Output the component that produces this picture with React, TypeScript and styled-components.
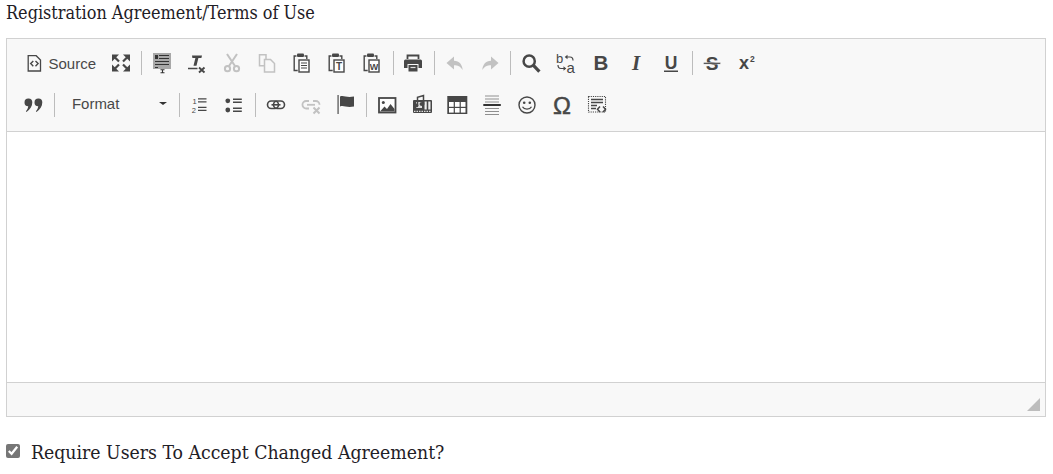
import React from "react";
import styled, { createGlobalStyle } from "styled-components";

const GlobalStyle = createGlobalStyle`
  html, body {
    margin: 0;
    padding: 0;
    background: #fff;
  }
`;

const Page = styled.div`
  padding: 0 7px 0 6px;
  font-family: "DejaVu Serif Condensed", "DejaVu Serif", "Liberation Serif", serif;
  color: #1f2026;
`;

const FieldLabel = styled.div`
  height: 38px;
  line-height: 26px;
  font-size: 17.9px;
`;

const Editor = styled.div`
  border: 1px solid #d1d1d1;
  display: flex;
  flex-direction: column;
`;

const Toolbar = styled.div`
  background: #f8f8f8;
  border-bottom: 1px solid #d1d1d1;
  padding: 3px 0 5px 9.5px;
  height: 84px;
`;

const ToolbarRow = styled.div`
  display: flex;
  align-items: center;
  height: 42px;
`;

const Button = styled.div<{ $off?: boolean; $wide?: boolean }>`
  width: ${(p) => (p.$wide ? "87px" : "35px")};
  height: 42px;
  display: flex;
  align-items: center;
  padding-left: 7px;
  box-sizing: border-box;
  gap: 5px;
  flex: none;
  opacity: ${(p) => (p.$off ? 0.3 : 1)};

  svg {
    flex: none;
    display: block;
    overflow: visible;
  }
`;

const ButtonText = styled.span`
  font: 15px "Liberation Sans", Arial, sans-serif;
  color: #484848;
`;

const Separator = styled.div`
  width: 1px;
  height: 24px;
  background: #bcbcbc;
  margin: 0 2.7px;
  flex: none;
`;

const Combo = styled.div`
  width: 118px;
  flex: none;
  display: flex;
  align-items: center;
  justify-content: space-between;
  box-sizing: border-box;
  padding: 0 9px 0 14px;
  margin-bottom: 3px;
  font: 15px "Liberation Sans", Arial, sans-serif;
  color: #484848;
`;

const ComboArrow = styled.span`
  width: 0;
  height: 0;
  border-left: 4px solid transparent;
  border-right: 4px solid transparent;
  border-top: 3.5px solid #333;
`;

const Content = styled.div`
  height: 250px;
  background: #fff;
`;

const BottomBar = styled.div`
  height: 34px;
  box-sizing: border-box;
  background: #f8f8f8;
  border-top: 1px solid #d1d1d1;
  display: flex;
  justify-content: flex-end;
  align-items: flex-end;
  padding: 0 5px 5px 0;
`;

const Resizer = styled.div`
  width: 13px;
  height: 13px;
  background: #bdbdbd;
  clip-path: polygon(100% 0, 100% 100%, 0 100%);
`;

const CheckRow = styled.label`
  display: flex;
  align-items: center;
  margin-top: 23px;
  font-size: 19.25px;
  line-height: 26px;
`;

const CheckBox = styled.input`
  width: 14px;
  height: 14px;
  margin: 0 11px 4px 0;
  accent-color: #767676;
`;

const INK = "#474747";

const Svg = ({ children }: { children: React.ReactNode }) => (
  <svg width="20" height="20" viewBox="0 0 20 20" fill="none">
    {children}
  </svg>
);

const letter = { fontFamily: "Liberation Sans", fill: INK, fontWeight: 700 } as const;

const clipboard = (
  <>
    <path d="M4.5 3H2.2v14.5h3.5M12.5 3h2.3v3" stroke={INK} strokeWidth="1.4" />
    <rect x="5" y="0.5" width="7" height="3.5" rx="1" fill={INK} />
    <rect x="7" y="7" width="10" height="12" fill="#fff" stroke={INK} strokeWidth="1.4" />
  </>
);

const icons: Record<string, React.ReactNode> = {
  source: (
    <>
      <path d="M4.200 2.700h8l4.300 4.300v11H4.200z" stroke={INK} strokeWidth="1.300" />
      <path d="M9.300 8l-2.600 2.600 2.600 2.600M11.500 8l2.600 2.600-2.600 2.600" stroke={INK} strokeWidth="1.400" />
    </>
  ),
  maximize: (
    <g>
      <g fill={INK}>
        <path d="M1 1.500h7L1 8.500z" />
        <path d="M19 1.500h-7l7 7z" />
        <path d="M1 18.500h7l-7-7z" />
        <path d="M19 18.500h-7l7-7z" />
      </g>
      <path d="M3 3.500l5 5M17 3.500l-5 5M3 16.500l5-5M17 16.500l-5-5" stroke={INK} strokeWidth="2.200" />
    </g>
  ),
  templates: (
    <>
      <rect x="1" y="0" width="18" height="16" fill="#a8a8a8" />
      <path d="M7 2.500h10M7 5.500h10M3 8.500h14M3 11.500h14M3 14.500h3" stroke="#333" strokeWidth="1.200" />
      <rect x="3" y="2" width="3" height="4" fill="#333" />
      <path d="M8.500 16.700h4M10.500 16.700v3M8.500 19.700h4" stroke="#333" strokeWidth="1.100" />
    </>
  ),
  removeFormat: (
    <>
      <path d="M5 2.500h10l-.6 2.400h-3l-1.900 7.800h-3l1.900-7.800h-3z" fill={INK} />
      <path d="M1 15.500h9.500" stroke={INK} strokeWidth="1.500" />
      <path d="M12 14.500l5.500 5M17.500 14.500l-5.500 5" stroke={INK} strokeWidth="1.900" />
    </>
  ),
  cut: (
    <g stroke={INK} strokeWidth="2">
      <path d="M5 1l8 12M15 1L7 13" />
      <circle cx="5.500" cy="15.700" r="2.600" />
      <circle cx="14.500" cy="15.700" r="2.600" />
    </g>
  ),
  copy: (
    <g stroke={INK} strokeWidth="1.500">
      <path d="M9 6V1.800H2.500v11H7" />
      <path d="M7.500 6.500h6l4 4v8.500h-10z" />
    </g>
  ),
  paste: (
    <>
      {clipboard}
      <path d="M9 10h6M9 12.500h6M9 15h6" stroke={INK} strokeWidth="1.100" />
    </>
  ),
  pasteText: (
    <>
      {clipboard}
      <text x="12" y="16.500" fontSize="10" textAnchor="middle" {...letter}>T</text>
    </>
  ),
  pasteWord: (
    <>
      {clipboard}
      <text x="12" y="16.500" fontSize="9" textAnchor="middle" {...letter}>W</text>
    </>
  ),
  print: (
    <>
      <path d="M4.500 6V2.500h11V6" stroke={INK} strokeWidth="1.800" />
      <path d="M2.500 6.500h15a1.500 1.500 0 0 1 1.500 1.500v7h-3.500v-4h-11v4H1V8a1.500 1.500 0 0 1 1.500-1.500z" fill={INK} />
      <rect x="5.500" y="12" width="9" height="6.500" fill={INK} />
      <path d="M7.500 14.500h5" stroke="#ddd" strokeWidth="1.200" />
    </>
  ),
  undo: <path d="M9 3.500L1.500 10 9 16.500v-4.200c4 0 6.200 1 8.700 4.700-.5-5.700-3.400-9-8.700-9.300z" fill={INK} />,
  redo: <path d="M11 3.500l7.500 6.500-7.500 6.500v-4.200c-4 0-6.200 1-8.700 4.700.5-5.700 3.400-9 8.700-9.300z" fill={INK} />,
  find: (
    <g stroke={INK}>
      <circle cx="8.200" cy="8.200" r="5.600" strokeWidth="2.500" />
      <path d="M12.200 12.200l6.200 6.400" strokeWidth="3.200" />
    </g>
  ),
  replace: (
    <>
      <text x="0" y="10" fontSize="13" fontFamily="Liberation Sans" fill={INK}>b</text>
      <text x="10.500" y="20" fontSize="15" fontFamily="Liberation Sans" fill={INK}>a</text>
      <path d="M17 7.500c0-2-1-3.500-3-3.500h-3M2 12c0 2 1 3.500 3 3.500h3" stroke={INK} strokeWidth="1.200" />
      <path d="M11.500 1.800v4.400L8.700 4zM7.500 13.300v4.400l2.800-2.200z" fill={INK} />
    </>
  ),
  bold: <text x="10" y="17" fontSize="20.500" textAnchor="middle" {...letter}>B</text>,
  italic: (
    <text x="10" y="17" fontSize="21" textAnchor="middle" fontFamily="Liberation Serif" fontStyle="italic" fontWeight="700" fill={INK}>I</text>
  ),
  underline: (
    <>
      <text x="10" y="15.500" fontSize="17.500" textAnchor="middle" {...letter}>U</text>
      <rect x="3" y="17.500" width="14" height="1.500" fill={INK} />
    </>
  ),
  strike: (
    <>
      <text x="10" y="17" fontSize="19" textAnchor="middle" {...letter}>S</text>
      <rect x="1.500" y="9.500" width="17" height="1.600" fill={INK} stroke="#f8f8f8" strokeWidth="0.400" />
    </>
  ),
  superscript: (
    <>
      <text x="2" y="16" fontSize="18" {...letter}>x</text>
      <text x="13" y="8.500" fontSize="8.500" {...letter}>2</text>
    </>
  ),
  quote: (
    <g fill={INK}>
      <path d="M4.500 3.500a3.800 3.800 0 0 1 3.800 3.800c0 4-2.300 7.500-5.800 9.700l-.6-.8c1.500-1.700 2.200-3.200 2.300-5a3.850 3.850 0 0 1 .3-7.700z" />
      <path d="M14.500 3.500a3.800 3.800 0 0 1 3.800 3.800c0 4-2.300 7.500-5.800 9.700l-.6-.8c1.500-1.700 2.200-3.200 2.300-5a3.850 3.850 0 0 1 .3-7.700z" />
    </g>
  ),
  numbered: (
    <>
      <text x="3.500" y="8.500" fontSize="7.500" fontFamily="Liberation Sans" fill={INK}>1</text>
      <text x="2.800" y="18" fontSize="7.500" fontFamily="Liberation Sans" fill={INK}>2</text>
      <path d="M9 3.800h8.500M9 6.800h8.500M9 12.300h8.500M9 15.300h8.500" stroke={INK} strokeWidth="1.300" />
    </>
  ),
  bulleted: (
    <>
      <circle cx="3.800" cy="5.800" r="2.400" fill={INK} />
      <circle cx="3.800" cy="15" r="2.400" fill={INK} />
      <path d="M9 4.200h8.800M9 7.200h8.800M9 13.300h8.800M9 16.300h8.800" stroke={INK} strokeWidth="1.400" />
    </>
  ),
  link: (
    <g stroke={INK} strokeWidth="1.600">
      <rect x="1.500" y="6" width="11" height="7.500" rx="3.700" />
      <rect x="7.500" y="6" width="11" height="7.500" rx="3.700" />
      <path d="M5.500 9.800h9" />
    </g>
  ),
  unlink: (
    <>
      <g stroke={INK} strokeWidth="1.800">
        <path d="M8 6H5.200a3.700 3.700 0 0 0 0 7.500H8M12 6h2.800a3.700 3.700 0 0 1 3.700 3.700" />
        <path d="M6 9.800h8" />
      </g>
      <path d="M12.500 12.500l6 6M18.500 12.500l-6 6" stroke={INK} strokeWidth="2" />
    </>
  ),
  anchor: (
    <>
      <rect x="1.300" y="0" width="1.600" height="19" fill="#777" />
      <path d="M4 1.500c4-1.500 6 1.500 14 0v10c-8 1.500-10-1.500-14 0z" fill={INK} />
    </>
  ),
  image: (
    <>
      <rect x="2" y="3" width="16.500" height="14.500" fill="#fff" stroke={INK} strokeWidth="1.800" />
      <circle cx="6.300" cy="7.500" r="1.500" fill={INK} />
      <path d="M3 16.500l4.500-5 2.500 2.500 3.500-5 4 5v2.500z" fill={INK} />
    </>
  ),
  media: (
    <>
      <rect x="1" y="5" width="19" height="13" rx="1" fill={INK} />
      <rect x="4" y="7" width="6" height="6" fill="#ddd" />
      <rect x="12.500" y="6.500" width="2.200" height="8" fill="#eee" />
      <rect x="16.300" y="6.500" width="2.200" height="8" fill="#eee" />
      <path d="M2 16.300h17" stroke="#ddd" strokeWidth="1.200" strokeDasharray="1.500 1" />
      <path d="M5.500 10V2.300l6-1.800v8" stroke={INK} strokeWidth="1.500" />
      <ellipse cx="4" cy="10.500" rx="2.500" ry="1.900" fill={INK} />
      <ellipse cx="10" cy="9" rx="2.500" ry="1.900" fill={INK} />
    </>
  ),
  table: (
    <>
      <rect x="0.300" y="1" width="20" height="18" fill={INK} />
      <g fill="#fff">
        <rect x="2" y="7" width="4.700" height="4.800" />
        <rect x="7.900" y="7" width="4.700" height="4.800" />
        <rect x="13.800" y="7" width="4.700" height="4.800" />
        <rect x="2" y="13" width="4.700" height="4.600" />
        <rect x="7.900" y="13" width="4.700" height="4.600" />
        <rect x="13.800" y="13" width="4.700" height="4.600" />
      </g>
    </>
  ),
  rule: (
    <>
      <path d="M3 1h14M3 4h14M3 7h14M3 13.500h14M3 16.500h14M3 19.500h14" stroke="#8f8f8f" strokeWidth="1.100" />
      <rect x="1.300" y="9" width="17.500" height="2" fill="#333" />
    </>
  ),
  smiley: (
    <>
      <circle cx="10" cy="10" r="8" stroke={INK} strokeWidth="1.400" />
      <circle cx="7.200" cy="7.800" r="1.300" fill={INK} />
      <circle cx="12.800" cy="7.800" r="1.300" fill={INK} />
      <path d="M5.500 11.800c1.800 3.200 7.200 3.200 9 0" stroke={INK} strokeWidth="1.300" />
    </>
  ),
  special: (
    <text x="10" y="19" fontSize="24" textAnchor="middle" fontFamily="Liberation Sans" fill={INK} stroke={INK} strokeWidth="0.500">Ω</text>
  ),
  blocks: (
    <>
      <rect x="1.500" y="1.500" width="17" height="15.500" stroke={INK} strokeWidth="1.100" strokeDasharray="1.200 1" />
      <path d="M4 4.500h12M4 7.500h12M4 10.500h6M4 13.500h5" stroke={INK} strokeWidth="1.300" />
      <path d="M13 11.500l-2.500 2.700 2.500 2.700M16 11.500l2.500 2.700-2.500 2.700" stroke={INK} strokeWidth="1.500" />
    </>
  ),
};

type Item = string | { name: string; off: boolean };
const dim = (name: string) => ({ name, off: true });

const groupsTop: Item[][] = [
  ["maximize"],
  ["templates", "removeFormat", dim("cut"), dim("copy"), "paste", "pasteText", "pasteWord"],
  ["print"],
  [dim("undo"), dim("redo")],
  ["find", "replace", "bold", "italic", "underline"],
  ["strike", "superscript"],
];

const groupsBottom: Item[][] = [
  ["numbered", "bulleted"],
  ["link", dim("unlink"), "anchor"],
  ["image", "media", "table", "rule", "smiley", "special", "blocks"],
];

const ToolButton = ({ item }: { item: Item }) => {
  const name = typeof item === "string" ? item : item.name;
  return (
    <Button $off={typeof item !== "string"}>
      <Svg>{icons[name]}</Svg>
    </Button>
  );
};

const Groups = ({ groups }: { groups: Item[][] }) => (
  <>
    {groups.map((group, i) => (
      <React.Fragment key={i}>
        {i > 0 && <Separator />}
        {group.map((item, j) => (
          <ToolButton key={j} item={item} />
        ))}
      </React.Fragment>
    ))}
  </>
);

export default function App() {
  return (
    <Page>
      <GlobalStyle />
      <FieldLabel>Registration Agreement/Terms of Use</FieldLabel>
      <Editor>
        <Toolbar>
          <ToolbarRow>
            <Button $wide>
              <Svg>{icons.source}</Svg>
              <ButtonText>Source</ButtonText>
            </Button>
            <Groups groups={groupsTop} />
          </ToolbarRow>
          <ToolbarRow>
            <ToolButton item="quote" />
            <Separator />
            <Combo>
              Format
              <ComboArrow />
            </Combo>
            <Separator />
            <Groups groups={groupsBottom} />
          </ToolbarRow>
        </Toolbar>
        <Content />
        <BottomBar>
          <Resizer />
        </BottomBar>
      </Editor>
      <CheckRow>
        <CheckBox type="checkbox" defaultChecked />
        Require Users To Accept Changed Agreement?
      </CheckRow>
    </Page>
  );
}
